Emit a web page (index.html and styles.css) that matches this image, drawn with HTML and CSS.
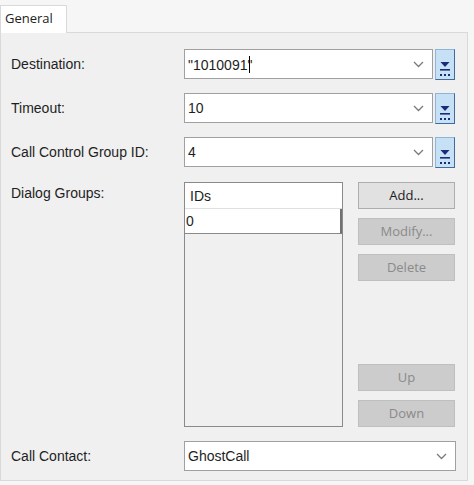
FILE: index.html
```html
<!DOCTYPE html>
<html>
<head>
<meta charset="utf-8">
<link rel="stylesheet" href="styles.css">
</head>
<body>
<div class="window">
  <div class="tabstrip">
    <div class="tab">General</div>
  </div>
  <div class="panel">
    <div class="row">
      <div class="label">Destination:</div>
      <div class="field">
        <div class="combo">
          <span class="value">"1010091"<span class="caret"></span></span>
          <svg class="chev" width="11" height="7" viewBox="0 0 11 7"><path d="M1 1 L5.5 5.5 L10 1" fill="none" stroke="#7a7a7a" stroke-width="1.3"/></svg>
        </div>
        <div class="ellip"><svg width="20" height="31" viewBox="0 0 20 31"><path d="M5.5 13 H14.5 L10 18 Z" fill="#1c2b78"/><rect x="5" y="20" width="10" height="1.6" fill="#1c2b78"/><rect x="5" y="25" width="2" height="2" fill="#1c2b78"/><rect x="9" y="25" width="2" height="2" fill="#1c2b78"/><rect x="13" y="25" width="2" height="2" fill="#1c2b78"/></svg></div>
      </div>
    </div>
    <div class="row">
      <div class="label">Timeout:</div>
      <div class="field">
        <div class="combo">
          <span class="value">10</span>
          <svg class="chev" width="11" height="7" viewBox="0 0 11 7"><path d="M1 1 L5.5 5.5 L10 1" fill="none" stroke="#7a7a7a" stroke-width="1.3"/></svg>
        </div>
        <div class="ellip"><svg width="20" height="31" viewBox="0 0 20 31"><path d="M5.5 13 H14.5 L10 18 Z" fill="#1c2b78"/><rect x="5" y="20" width="10" height="1.6" fill="#1c2b78"/><rect x="5" y="25" width="2" height="2" fill="#1c2b78"/><rect x="9" y="25" width="2" height="2" fill="#1c2b78"/><rect x="13" y="25" width="2" height="2" fill="#1c2b78"/></svg></div>
      </div>
    </div>
    <div class="row">
      <div class="label">Call Control Group ID:</div>
      <div class="field">
        <div class="combo">
          <span class="value">4</span>
          <svg class="chev" width="11" height="7" viewBox="0 0 11 7"><path d="M1 1 L5.5 5.5 L10 1" fill="none" stroke="#7a7a7a" stroke-width="1.3"/></svg>
        </div>
        <div class="ellip"><svg width="20" height="31" viewBox="0 0 20 31"><path d="M5.5 13 H14.5 L10 18 Z" fill="#1c2b78"/><rect x="5" y="20" width="10" height="1.6" fill="#1c2b78"/><rect x="5" y="25" width="2" height="2" fill="#1c2b78"/><rect x="9" y="25" width="2" height="2" fill="#1c2b78"/><rect x="13" y="25" width="2" height="2" fill="#1c2b78"/></svg></div>
      </div>
    </div>
    <div class="row groups">
      <div class="label top">Dialog Groups:</div>
      <div class="groupfield">
        <div class="list">
          <div class="lhead">IDs</div>
          <div class="litem">0</div>
        </div>
        <div class="btns">
          <div class="btn">Add...</div>
          <div class="btn dis">Modify...</div>
          <div class="btn dis">Delete</div>
          <div class="spacer"></div>
          <div class="btn dis">Up</div>
          <div class="btn dis">Down</div>
        </div>
      </div>
    </div>
    <div class="row">
      <div class="label">Call Contact:</div>
      <div class="field">
        <div class="combo wide">
          <span class="value">GhostCall</span>
          <svg class="chev" width="11" height="7" viewBox="0 0 11 7"><path d="M1 1 L5.5 5.5 L10 1" fill="none" stroke="#7a7a7a" stroke-width="1.3"/></svg>
        </div>
      </div>
    </div>
  </div>
</div>
</body>
</html>
```

FILE: styles.css
```css
html, body {
  margin: 0;
  padding: 0;
  background: #f6f6f6;
}
.window {
  width: 474px;
  height: 485px;
  font-family: "Liberation Sans", Arial, sans-serif;
  font-size: 14px;
  color: #1e1e1e;
}
.tabstrip {
  height: 32px;
  box-sizing: border-box;
  padding-top: 5px;
  display: flex;
}
.tab {
  width: 67px;
  height: 28px;
  box-sizing: border-box;
  background: #ffffff;
  border: 1px solid #d9d9d9;
  border-bottom: none;
  font-family: "Open Sans", "Noto Sans", sans-serif;
  font-size: 13px;
  color: #222;
  padding-left: 4px;
  line-height: 25px;
  position: relative;
  z-index: 1;
}
.panel {
  width: 468px;
  height: 449px;
  box-sizing: border-box;
  background: #f0f0f0;
  border: 1px solid #d9d9d9;
  padding: 16px 0 0 10px;
  display: flex;
  flex-direction: column;
  gap: 14px;
}
.row {
  display: flex;
  align-items: center;
}
.label {
  width: 173px;
  flex: none;
}
.label.top {
  align-self: flex-start;
  padding-top: 3px;
}
.field {
  display: flex;
  align-items: flex-start;
  gap: 2px;
  height: 30px;
}
.combo {
  width: 249px;
  height: 30px;
  box-sizing: border-box;
  background: #fff;
  border: 1px solid #a0a0a0;
  display: flex;
  align-items: center;
  padding: 0 8px 0 3px;
}
.combo.wide {
  width: 272px;
}
.value {
  flex: 1;
  position: relative;
}
.caret {
  display: inline-block;
  width: 1px;
  height: 17px;
  background: #000;
  vertical-align: -3px;
  margin-left: -3px;
}
.chev {
  flex: none;
}
.ellip {
  width: 20px;
  height: 31px;
  box-sizing: border-box;
  background: #c6e1f5;
  border: 1px solid #8fb4d6;
  border-right-color: #3f6a99;
  border-bottom-color: #3f6a99;
  position: relative;
}
.ellip svg {
  position: absolute;
  left: -1px;
  top: -1px;
}
.groups {
  align-items: flex-start;
  margin-top: 1px;
}
.groupfield {
  display: flex;
  gap: 15px;
}
.list {
  width: 159px;
  height: 245px;
  box-sizing: border-box;
  border: 1px solid #8a8a8a;
  background: #f0f0f0;
}
.lhead {
  height: 25px;
  background: #fff;
  border-bottom: 1px solid #e0e0e0;
  padding-left: 5px;
  line-height: 27px;
}
.litem {
  height: 25px;
  box-sizing: border-box;
  background: #fff;
  border-right: 2px solid #707070;
  border-bottom: 1px solid #8a8a8a;
  padding-left: 1px;
  line-height: 24px;
}
.btns {
  width: 97px;
  height: 245px;
  display: flex;
  flex-direction: column;
  gap: 9px;
}
.spacer {
  flex: 1;
}
.btn {
  height: 27px;
  box-sizing: border-box;
  border: 1px solid #adadad;
  background: #e1e1e1;
  text-align: center;
  line-height: 25px;
  font-family: "Open Sans", "Noto Sans", sans-serif;
  font-size: 13px;
  color: #1a1a1a;
}
.btn.dis {
  background: #cccccc;
  border-color: #bfbfbf;
  color: #8a8a8a;
}
```
